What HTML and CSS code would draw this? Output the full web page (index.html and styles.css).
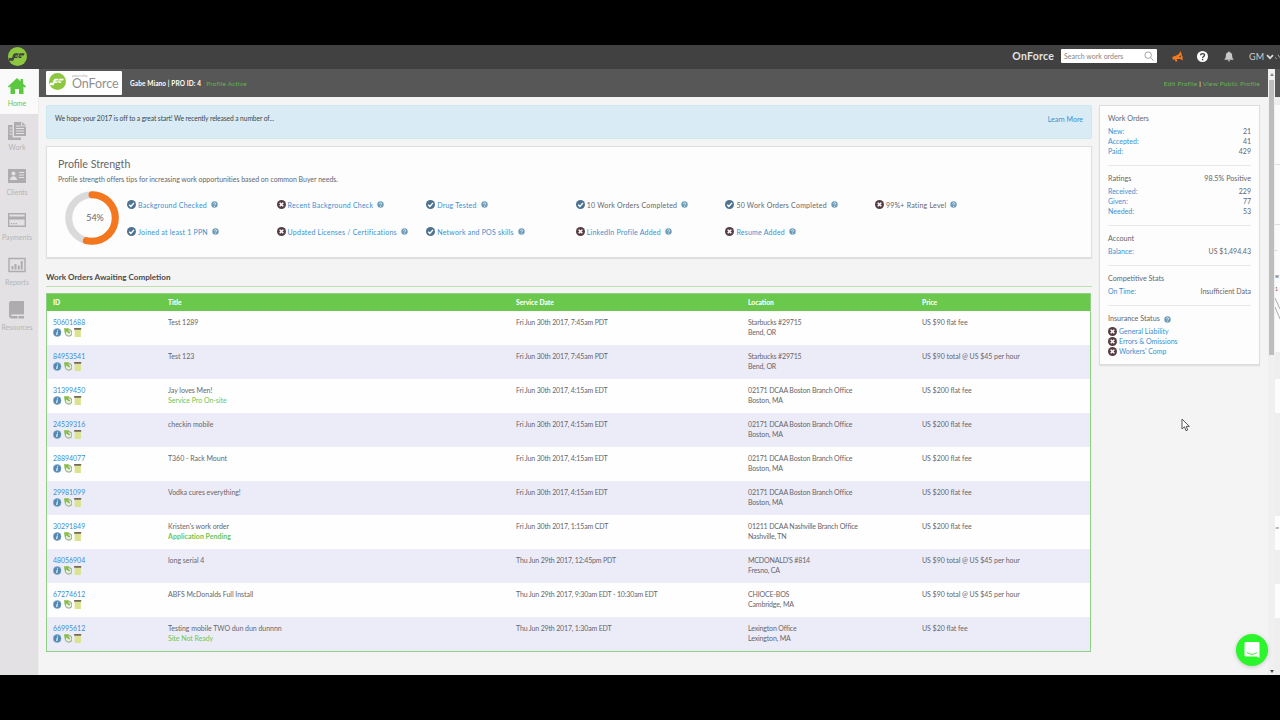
FILE: index.html
```html
<!DOCTYPE html>
<html lang="en">
<head>
    <meta charset="UTF-8">
    <meta name="viewport" content="width=device-width, initial-scale=1.0">
    <title>OnForce - Home</title>
    <link rel="stylesheet" href="styles.css">
</head>
<body>
    <svg class="sprite" width="0" height="0">
        <symbol id="logo" viewBox="0 0 20 20">
            <circle cx="10" cy="10" r="10" fill="#8dc63f"/>
            <path fill="currentColor" d="M1 14.500h4.500l1.200-2.800h3l.7-1.700H7.400l.5-1.100h2.600l.9-2.200H8C6.500 6.700 5.800 7.500 5.300 8.700L4.300 11.500H1.200zM12.300 6.700h5.200l-.9 2.200h-4.200l-.5 1.100h2.700l-.7 1.700h-2.700l.3-1-1 .1z"/>
        </symbol>
        <symbol id="check" viewBox="0 0 12 12">
            <circle cx="6" cy="6" r="6" fill="#4d7390"/>
            <path d="M3 6.300l2.200 2.200L9.300 3.800" fill="none" stroke="#fff" stroke-width="1.900"/>
        </symbol>
        <symbol id="cross" viewBox="0 0 12 12">
            <circle cx="6" cy="6" r="6" fill="#573c43"/>
            <path d="M3.600 3.600l4.800 4.800M8.400 3.600L3.600 8.400" stroke="#fff" stroke-width="2"/>
        </symbol>
        <symbol id="help" viewBox="0 0 12 12">
            <circle cx="6" cy="6" r="5.500" fill="#6d9cb8"/>
            <path d="M4.200 4.700C4.200 2.300 8 2.400 8 4.600 8 6 6.200 5.800 6.200 7.500M6.200 8.600V10" fill="none" stroke="#fff" stroke-width="1.300"/>
        </symbol>
        <symbol id="info" viewBox="0 0 12 12">
            <circle cx="6" cy="6" r="5.500" fill="#4f87b3" stroke="#86a9c4"/>
            <path d="M6.600 2.200L6.300 3.500M6.100 4.600L5.300 9.500" stroke="#fff" stroke-width="1.600"/>
        </symbol>
        <symbol id="history" viewBox="0 0 12 12">
            <circle cx="6.500" cy="6.500" r="4.600" fill="#e8efe0" stroke="#9fb196" stroke-width="1.700"/>
            <path d="M0 0h7.500L5.500 2.300 9 6.500 7 7.500 3.500 4.500 1 6.500z" fill="#86bd45"/>
        </symbol>
        <symbol id="note" viewBox="0 0 8 10">
            <path d="M.5 1h7v9h-7z" fill="#dbe391"/>
            <path d="M0 0h8v1.900H0z" fill="#74685a"/>
        </symbol>
    </svg>

    <div class="app">
        <header class="topbar">
            <svg class="topbar-logo"><use href="#logo"/></svg>
            <span class="brand">OnForce</span>
            <div class="search">
                <span>Search work orders</span>
                <svg viewBox="0 0 12 12"><circle cx="5" cy="5" r="3.900"/><path d="M8 8l3.500 3.500"/></svg>
            </div>
            <svg class="horn" viewBox="0 0 12 12"><path d="M9.500 0L11 5.500c1 .3 1 1.500.3 1.900L12 10C9 8.500 7 8.500 5 9l1 2.300-2 .5L3 9.300 1 9.500.2 6.600 4 5.300C6.500 4.300 8.500 2.500 9.500 0zM9.300 4.500L7.500 6.300l2.400.6z" fill-rule="evenodd"/></svg>
            <svg class="question" viewBox="0 0 12 12"><circle cx="6" cy="6" r="6"/><path d="M4 4.700C4 2.200 8.200 2.300 8.200 4.600 8.200 6.100 6.100 6 6.100 7.500M6.100 8.500V10"/></svg>
            <svg class="bell" viewBox="0 0 12 12"><path d="M6 0c.7 0 .9.500.9 1C9 1.500 9.800 3 9.800 5c0 2.500.7 3.200 1.700 4.300v.6H.5v-.6C1.500 8.200 2.200 7.500 2.200 5c0-2 .8-3.500 2.900-4 0-.5.200-1 .9-1zM4.500 10.500h3C7.300 12.400 4.700 12.400 4.500 10.500z"/></svg>
            <span class="user">GM</span>
            <svg class="chevron" viewBox="0 0 8 6"><path d="M1 1.200l3 3 3-3"/></svg>
            <svg class="chevron cut" viewBox="0 0 5 6"><path d="M.5 3.500l1 1.500M3 .8l2 3"/></svg>
        </header>

        <div class="body">
            <nav class="sidebar">
                <a class="nav-item active">
                    <svg viewBox="0 0 18 18"><path d="M9 1L0 9.500l1 1.200L2.500 9.500V17H7v-5h4v5h4.500V9.500L17 10.700l1-1.200-3-2.900V2h-2.500v2.300z"/></svg>
                    <span>Home</span>
                </a>
                <a class="nav-item">
                    <svg viewBox="0 0 18 18"><path d="M6 0h8l4 3.500V14H6zM0 3h4.500v12.500H13V18H0z"/><path class="line" d="M8 4h4.500M8 6.500h8M8 9h8M8 11.500h8M1.500 6H4M1.500 9H4M1.500 12H4M13.500.5V4H18"/></svg>
                    <span>Work</span>
                </a>
                <a class="nav-item">
                    <svg viewBox="0 0 18 18"><path d="M0 2h18v14H0z"/><path class="line" d="M11 5.500h5M11 8h5M11 10.500h5"/><circle class="hole" cx="5.500" cy="6.500" r="2"/><path class="hole" d="M2 13c0-5 7-5 7 0z"/></svg>
                    <span>Clients</span>
                </a>
                <a class="nav-item">
                    <svg viewBox="0 0 18 18"><path class="outline" d="M.7 2.700h16.600v12.600H.7z"/><path d="M0 5.500h18v3H0zM2.500 12h1.500v1.300H2.500zM5 12h1.500v1.300H5zM7.500 12H9v1.300H7.500z"/></svg>
                    <span>Payments</span>
                </a>
                <a class="nav-item">
                    <svg viewBox="0 0 18 18"><path class="outline" d="M1 2.500h16v13H1z"/><path d="M3.500 10h2v3.500h-2zM6.500 8h2v5.500h-2zM9.700 9.500h2v4h-2zM12.700 5h2v8.500h-2z"/></svg>
                    <span>Reports</span>
                </a>
                <a class="nav-item">
                    <svg viewBox="0 0 18 18"><path d="M3 0h13v13.500H4c-1.500 0-1.500 1.500 0 1.500h12v2.500H4c-2 0-3-1-3-2.500V2c0-1 1-2 2-2z"/><path class="line" d="M4 14.300h12.500M10 15v3"/></svg>
                    <span>Resources</span>
                </a>
            </nav>

            <main class="main">
                <div class="profile-bar">
                    <div class="profile-logo">
                        <svg><use href="#logo"/></svg>
                        <div><small>powered by</small><b>OnForce</b></div>
                    </div>
                    <strong>Gabe Miano | PRO ID: 4</strong>
                    <span class="status">Profile Active</span>
                    <div class="profile-links"><a>Edit Profile</a> <i>|</i> <a>View Public Profile</a></div>
                </div>

                <div class="columns">
                    <div class="content">
                        <div class="alert">
                            <span>We hope your 2017 is off to a great start! We recently released a number of...</span>
                            <a>Learn More</a>
                        </div>

                        <section class="card strength">
                            <h2>Profile Strength</h2>
                            <p>Profile strength offers tips for increasing work opportunities based on common Buyer needs.</p>
                            <div class="strength-row">
                                <div class="donut">
                                    <svg viewBox="0 0 54 54">
                                        <circle class="track" cx="27" cy="27" r="23.300"/>
                                        <circle class="value" cx="27" cy="27" r="23.300" pathLength="100" stroke-dasharray="54 46"/>
                                    </svg>
                                    <span>54%</span>
                                </div>
                                <div class="checks" id="checks"></div>
                            </div>
                        </section>

                        <h3>Work Orders Awaiting Completion</h3>
                        <table class="orders">
                            <thead>
                                <tr>
                                    <th class="col-id">ID</th>
                                    <th class="col-title">Title</th>
                                    <th class="col-date">Service Date</th>
                                    <th class="col-location">Location</th>
                                    <th>Price</th>
                                </tr>
                            </thead>
                            <tbody id="orders"></tbody>
                        </table>
                    </div>

                    <aside class="card stats">
                        <section>
                            <h4>Work Orders</h4>
                            <div><a>New:</a><span>21</span></div>
                            <div><a>Accepted:</a><span>41</span></div>
                            <div><a>Paid:</a><span>429</span></div>
                        </section>
                        <section>
                            <h4>Ratings <span>98.5% Positive</span></h4>
                            <div><a>Received:</a><span>229</span></div>
                            <div><a>Given:</a><span>77</span></div>
                            <div><a>Needed:</a><span>53</span></div>
                        </section>
                        <section>
                            <h4>Account</h4>
                            <div><a>Balance:</a><span>US $1,494.43</span></div>
                        </section>
                        <section>
                            <h4>Competitive Stats</h4>
                            <div><a>On Time:</a><span>Insufficient Data</span></div>
                        </section>
                        <section class="insurance">
                            <h4>Insurance Status <svg class="help"><use href="#help"/></svg></h4>
                            <div><svg><use href="#cross"/></svg><a>General Liability</a></div>
                            <div><svg><use href="#cross"/></svg><a>Errors &amp; Omissions</a></div>
                            <div><svg><use href="#cross"/></svg><a>Workers' Comp</a></div>
                        </section>
                    </aside>
                </div>
            </main>

            <div class="scrollbar">
                <span class="arrow up"></span>
                <div class="thumb"></div>
                <span class="arrow down"></span>
            </div>
            <div class="edge">
                <div class="edge-top"></div>
                <div class="edge-panel">
                    <i class="edge-line"></i>
                    <i class="edge-line"></i>
                    <span class="edge-text">..</span>
                    <span class="edge-text">w</span>
                    <span class="edge-text">1</span>
                    <svg viewBox="0 0 5 24"><path d="M0 0l5 11M0 9l5 12"/></svg>
                </div>
                <div class="edge-gap"></div>
                <div class="edge-block"></div>
                <div class="edge-block second"><span>.w</span></div>
                <div class="edge-block last"></div>
            </div>
        </div>

        <div class="chat">
            <svg viewBox="0 0 16 16"><path d="M2 0h12c1 0 1.500.5 1.500 1.500V16l-3-1.500H2C1 14.500.5 14 .5 13V1.500C.5.500 1 0 2 0z"/><path class="smile" d="M3 10.500c3 2.300 7 2.300 10 0"/></svg>
        </div>
        <svg class="cursor" viewBox="0 0 9 14"><path d="M1 1v10l2.500-2.200L5 12.700l1.700-.7L5.200 8.400H8.300z"/></svg>
    </div>

    <script>
        const checks = [
            ['check', 'Background Checked', true],
            ['cross', 'Recent Background Check', true],
            ['check', 'Drug Tested', true],
            ['check', '10 Work Orders Completed', false],
            ['check', '50 Work Orders Completed', false],
            ['cross', '99%+ Rating Level', false],
            ['check', 'Joined at least 1 PPN', true],
            ['cross', 'Updated Licenses / Certifications', true],
            ['check', 'Network and POS skills', true],
            ['cross', 'LinkedIn Profile Added', true],
            ['cross', 'Resume Added', true]
        ];

        // id, title, status, service date, location, city, price
        const orders = [
            ['50601688', 'Test 1289', '', 'Fri Jun 30th 2017, 7:45am PDT', 'Starbucks #29715', 'Bend, OR', 'US $90 flat fee'],
            ['84953541', 'Test 123', '', 'Fri Jun 30th 2017, 7:45am PDT', 'Starbucks #29715', 'Bend, OR', 'US $90 total @ US $45 per hour'],
            ['31399450', 'Jay loves Men!', 'Service Pro On-site', 'Fri Jun 30th 2017, 4:15am EDT', '02171 DCAA Boston Branch Office', 'Boston, MA', 'US $200 flat fee'],
            ['24539316', 'checkin mobile', '', 'Fri Jun 30th 2017, 4:15am EDT', '02171 DCAA Boston Branch Office', 'Boston, MA', 'US $200 flat fee'],
            ['28894077', 'T360 - Rack Mount', '', 'Fri Jun 30th 2017, 4:15am EDT', '02171 DCAA Boston Branch Office', 'Boston, MA', 'US $200 flat fee'],
            ['29981099', 'Vodka cures everything!', '', 'Fri Jun 30th 2017, 4:15am EDT', '02171 DCAA Boston Branch Office', 'Boston, MA', 'US $200 flat fee'],
            ['30291849', "Kristen's work order", 'Application Pending', 'Fri Jun 30th 2017, 1:15am CDT', '01211 DCAA Nashville Branch Office', 'Nashville, TN', 'US $200 flat fee'],
            ['48056904', 'long serial 4', '', 'Thu Jun 29th 2017, 12:45pm PDT', "MCDONALD'S #814", 'Fresno, CA', 'US $90 total @ US $45 per hour'],
            ['67274612', 'ABFS McDonalds Full Install', '', 'Thu Jun 29th 2017, 9:30am EDT - 10:30am EDT', 'CHIOCE-BOS', 'Cambridge, MA', 'US $90 total @ US $45 per hour'],
            ['66995612', 'Testing mobile TWO dun dun dunnnn', 'Site Not Ready', 'Thu Jun 29th 2017, 1:30am EDT', 'Lexington Office', 'Lexington, MA', 'US $20 flat fee']
        ];

        document.getElementById('checks').innerHTML = checks.map(([icon, label, link]) => `
            <div class="check">
                <svg><use href="#${icon}"/></svg>
                ${link ? `<a>${label}</a>` : `<span>${label}</span>`}
                <svg class="help"><use href="#help"/></svg>
            </div>`).join('');

        document.getElementById('orders').innerHTML = orders.map(([id, title, status, date, place, city, price]) => `
            <tr>
                <td><a>${id}</a><div class="row-icons"><svg><use href="#info"/></svg><svg><use href="#history"/></svg><svg class="note"><use href="#note"/></svg></div></td>
                <td>${title}<div class="order-status${status === 'Application Pending' ? ' pending' : ''}">${status}</div></td>
                <td class="tight">${date}</td>
                <td class="tight">${place}<br>${city}</td>
                <td>${price}</td>
            </tr>`).join('');
    </script>
</body>
</html>
```
FILE: styles.css
```css
:root {
    --green: #6ac84c;
    --link: #3c8fd0;
    --text: #66666a;
    --border: #dedede;
}

* {
    margin: 0;
    padding: 0;
    box-sizing: border-box;
}

body {
    height: 720px;
    padding: 45px 0;
    overflow: hidden;
    background: #000;
    color: var(--text);
    font-family: Lato, sans-serif;
    font-size: 7px;
    line-height: 10px;
}

.sprite {
    position: absolute;
}

a {
    color: var(--link);
}

.app {
    position: relative;
    height: 630px;
    overflow: hidden;
    background: #f4f4f4;
    display: flex;
    flex-direction: column;
}

/* top bar */
.topbar {
    height: 24px;
    flex: none;
    background: #414141;
    display: flex;
    align-items: center;
    padding-left: 8px;
}

.topbar-logo {
    width: 19px;
    height: 19px;
    margin-top: -1px;
    color: #414141;
}

.brand {
    margin-left: auto;
    margin-top: -2px;
    color: #e4e4e4;
    font-size: 10.5px;
    font-weight: 700;
    letter-spacing: 0.25px;
}

.search {
    width: 96px;
    height: 14px;
    margin-left: 7px;
    margin-top: -2px;
    padding: 0 3px;
    background: #fff;
    border-radius: 1px;
    color: #858585;
    display: flex;
    align-items: center;
    justify-content: space-between;
}

.search svg {
    width: 10px;
    height: 10px;
    fill: none;
    stroke: #999;
    stroke-width: 1.1;
}

.horn {
    width: 11px;
    height: 11px;
    margin-left: 15px;
    margin-top: -1px;
    fill: #f47a20;
}

.question {
    width: 11px;
    height: 11px;
    margin-left: 14px;
    margin-top: -1px;
    fill: #fff;
}

.question path {
    fill: none;
    stroke: #414141;
    stroke-width: 1.5;
}

.bell {
    width: 10px;
    height: 11px;
    margin-left: 16px;
    margin-top: -1px;
    fill: #c8c8c8;
}

.user {
    margin-left: 15px;
    font-size: 9px;
    color: #ccc;
}

.chevron {
    width: 8px;
    height: 6px;
    margin-left: 2px;
    fill: none;
    stroke: #ddd;
    stroke-width: 1.7;
}

.chevron.cut {
    width: 5px;
    margin-left: 1px;
    stroke: #aaa;
    stroke-width: 1;
}

.body {
    display: flex;
    flex: 1;
    min-height: 0;
}

/* left navigation */
.sidebar {
    width: 39px;
    flex: none;
    background: #e3e1e3;
    border-right: 1px solid #eee;
}

.nav-item {
    height: 44.8px;
    padding-top: 8px;
    display: flex;
    flex-direction: column;
    align-items: center;
    gap: 3px;
    color: #b5b4b6;
    fill: #adacae;
    margin-right: 4px;
}

.nav-item svg {
    width: 18px;
    height: 18px;
    flex: none;
}

.nav-item span {
    margin-top: -0.4px;
    white-space: nowrap;
}

.nav-item .line {
    fill: none;
    stroke: #e3e1e3;
    stroke-width: 1;
}

.nav-item .hole {
    fill: #e3e1e3;
}

.nav-item .outline {
    fill: none;
    stroke: #adacae;
    stroke-width: 1.4;
}

.nav-item.active {
    margin-right: 0;
    padding-right: 4px;
    background: #fafafa;
    color: var(--green);
    fill: #5ac940;
}

/* profile bar */
.main {
    flex: 1;
    min-width: 0;
}

.profile-bar {
    height: 28px;
    padding: 2px 8px 0 7px;
    background: #575757;
    display: flex;
    align-items: center;
    font-size: 6.5px;
}

.profile-logo {
    width: 76px;
    height: 24px;
    margin: -3px 8px 0 0;
    padding: 0 3px;
    background: #fff;
    border-radius: 1px;
    display: flex;
    align-items: center;
    gap: 6px;
}

.profile-logo svg {
    width: 17px;
    height: 17px;
    flex: none;
    margin-top: -3px;
    color: #fff;
}

.profile-logo div {
    display: flex;
    flex-direction: column;
    margin-top: -2px;
}

.profile-logo small {
    font-size: 3px;
    line-height: 3px;
    color: #aaa;
}

.profile-logo b {
    font-size: 12.5px;
    line-height: 11px;
    font-weight: 400;
    letter-spacing: -0.1px;
    color: #8f8f8f;
}

.profile-bar strong {
    color: #fff;
    letter-spacing: 0.1px;
}

.status {
    margin-left: 5px;
    color: #62b64c;
    letter-spacing: 0.2px;
}

.profile-links {
    margin-left: auto;
    color: #fff;
    letter-spacing: 0.2px;
}

.profile-links a {
    color: #62b64c;
}

.profile-links i {
    font-style: normal;
}

.columns {
    display: flex;
    gap: 7px;
    padding: 8px 8px 0 7px;
    align-items: flex-start;
}

.content {
    width: 1046px;
    flex: none;
}

.alert {
    height: 34px;
    padding: 7px 8px;
    display: flex;
    justify-content: space-between;
    background: #d9ebf4;
    border: 1px solid #cfe7ef;
    border-radius: 2px;
    color: #3f474b;
    letter-spacing: -0.09px;
    font-size: 6.7px;
}

.alert a {
    margin-top: 1px;
    font-size: 7px;
    letter-spacing: 0;
}

.card {
    background: #fdfdfd;
    border: 1px solid var(--border);
    box-shadow: 0 1px 1px rgba(0, 0, 0, 0.08);
}

.strength {
    height: 112px;
    margin-top: 7px;
    padding: 11px 11px 0;
}

.strength h2 {
    font-size: 10.6px;
    line-height: 12px;
    font-weight: 400;
}

.strength p {
    margin-top: 4px;
    letter-spacing: -0.03px;
}

.strength-row {
    display: flex;
    margin-top: 7px;
}

.donut {
    width: 69px;
    height: 54px;
    padding-left: 7px;
    display: grid;
    align-items: center;
}

.donut svg,
.donut span {
    grid-area: 1 / 1;
}

.donut svg {
    width: 54px;
    height: 54px;
    fill: none;
    stroke-width: 7;
    transform: rotate(-90deg);
}

.donut .track {
    stroke: #dadada;
}

.donut .value {
    stroke: #f4771e;
    stroke-linecap: round;
}

.donut span {
    width: 60px;
    text-align: center;
    font-size: 9px;
}

.checks {
    display: grid;
    grid-template-columns: repeat(6, 149.6px);
    grid-auto-rows: 27px;
    letter-spacing: 0.22px;
}

.check {
    display: flex;
    align-items: center;
    white-space: nowrap;
}

.check svg {
    width: 9px;
    height: 9px;
    margin-right: 2px;
}

.check .help,
.stats .help {
    width: 7px;
    height: 7px;
    margin-left: 4px;
}

h3 {
    height: 22px;
    margin-top: 7px;
    padding-top: 7px;
    border-bottom: 1px solid #b9e2ad;
    color: #4a4a4a;
    font-size: 8.1px;
}

/* work orders table */
.orders {
    width: 1045px;
    margin-top: 6px;
    border: 1px solid #8fcf86;
    border-collapse: separate;
    border-spacing: 0;
    table-layout: fixed;
}

.orders th {
    height: 17px;
    padding: 0 6px 2px;
    background: var(--green);
    color: #fff;
    font-size: 6.7px;
    font-weight: 900;
    text-align: left;
}

.orders td {
    height: 34px;
    padding: 6px 6px 0;
    vertical-align: top;
    white-space: nowrap;
    letter-spacing: -0.04px;
}

.orders .tight {
    letter-spacing: -0.16px;
}

.orders tbody tr {
    background: #fefefe;
}

.orders tbody tr:nth-child(even) {
    background: #ececf9;
}

.col-id {
    width: 115px;
}

.col-title {
    width: 348px;
}

.col-date {
    width: 232px;
}

.col-location {
    width: 174px;
}

.row-icons {
    height: 11px;
    display: flex;
    align-items: center;
    gap: 2px;
}

.row-icons svg {
    width: 8.5px;
    height: 9px;
}

.row-icons .note {
    width: 7.5px;
}

.order-status {
    color: #6cc655;
}

.order-status.pending {
    font-weight: 700;
    letter-spacing: 0.03px;
}

/* account stats */
.stats {
    width: 161px;
    height: 260px;
    padding: 8px 8px 0;
}

.stats section {
    margin-bottom: 8px;
    padding-bottom: 9px;
    border-bottom: 1px solid #e8e8e8;
}

.stats section.insurance {
    border-bottom: 0;
}

.stats section > * {
    display: flex;
    align-items: center;
    justify-content: space-between;
    height: 10px;
}

.stats h4 {
    margin-bottom: 2px;
    font-weight: 400;
    font-size: 7.2px;
}

.stats .insurance > * {
    justify-content: flex-start;
}

.insurance div svg {
    width: 9px;
    height: 9px;
    margin-right: 2px;
}

/* window scrollbar and the page behind */
.scrollbar {
    width: 7px;
    flex: none;
    background: #f0f0f0;
    display: flex;
    flex-direction: column;
    align-items: center;
}

.arrow {
    border: 2px solid transparent;
}

.arrow.up {
    height: 7px;
    margin-bottom: 4px;
    border-top-width: 4px;
    border-bottom: 3px solid #888;
}

.thumb {
    width: 5px;
    height: 275px;
    background: #bdbdbd;
}

.arrow.down {
    margin-top: auto;
    border-top: 3px solid #444;
}

.edge {
    width: 5px;
    flex: none;
    background: #eee;
    overflow: hidden;
}

.edge-top {
    height: 28px;
    background: #575757;
}

.edge-panel {
    height: 247px;
    margin-top: 8px;
    background: #fbfbfb;
    display: flex;
    flex-direction: column;
}

.edge-line {
    margin-top: 59px;
    border-top: 1px solid #ddd;
}

.edge-text {
    height: 10px;
    margin-top: 19px;
    color: #888;
    font-size: 5px;
}

.edge-text + .edge-text {
    margin-top: 17px;
    color: #555;
}

.edge-text + .edge-text + .edge-text {
    margin-top: 3px;
}

.edge-panel svg {
    width: 5px;
    height: 24px;
    margin-top: 4px;
    fill: none;
    stroke: #aaa;
}

.edge-gap {
    height: 27px;
}

.edge-block {
    height: 34px;
    margin-bottom: 34px;
    background: #fdfdfd;
    color: #666;
    font-size: 4px;
}

/* rows further down the page behind */
.edge-block.second {
    margin-top: 103px;
}

.edge-block span {
    display: block;
    padding-top: 7px;
}

.edge-block.last {
    margin-bottom: 0;
}

/* overlays */
.chat {
    position: absolute;
    right: 12px;
    bottom: 9px;
    width: 32px;
    height: 32px;
    border-radius: 50%;
    background: #2bf52b;
    box-shadow: 0 1px 4px rgba(0, 0, 0, 0.2);
    display: grid;
    place-items: center;
}

.chat svg {
    width: 16px;
    height: 16px;
    fill: #fff;
}

.chat .smile {
    fill: none;
    stroke: #2bf52b;
}

.cursor {
    position: absolute;
    left: 1181px;
    top: 373px;
    width: 9px;
    height: 14px;
    fill: #fff;
    stroke: #555;
}
```
